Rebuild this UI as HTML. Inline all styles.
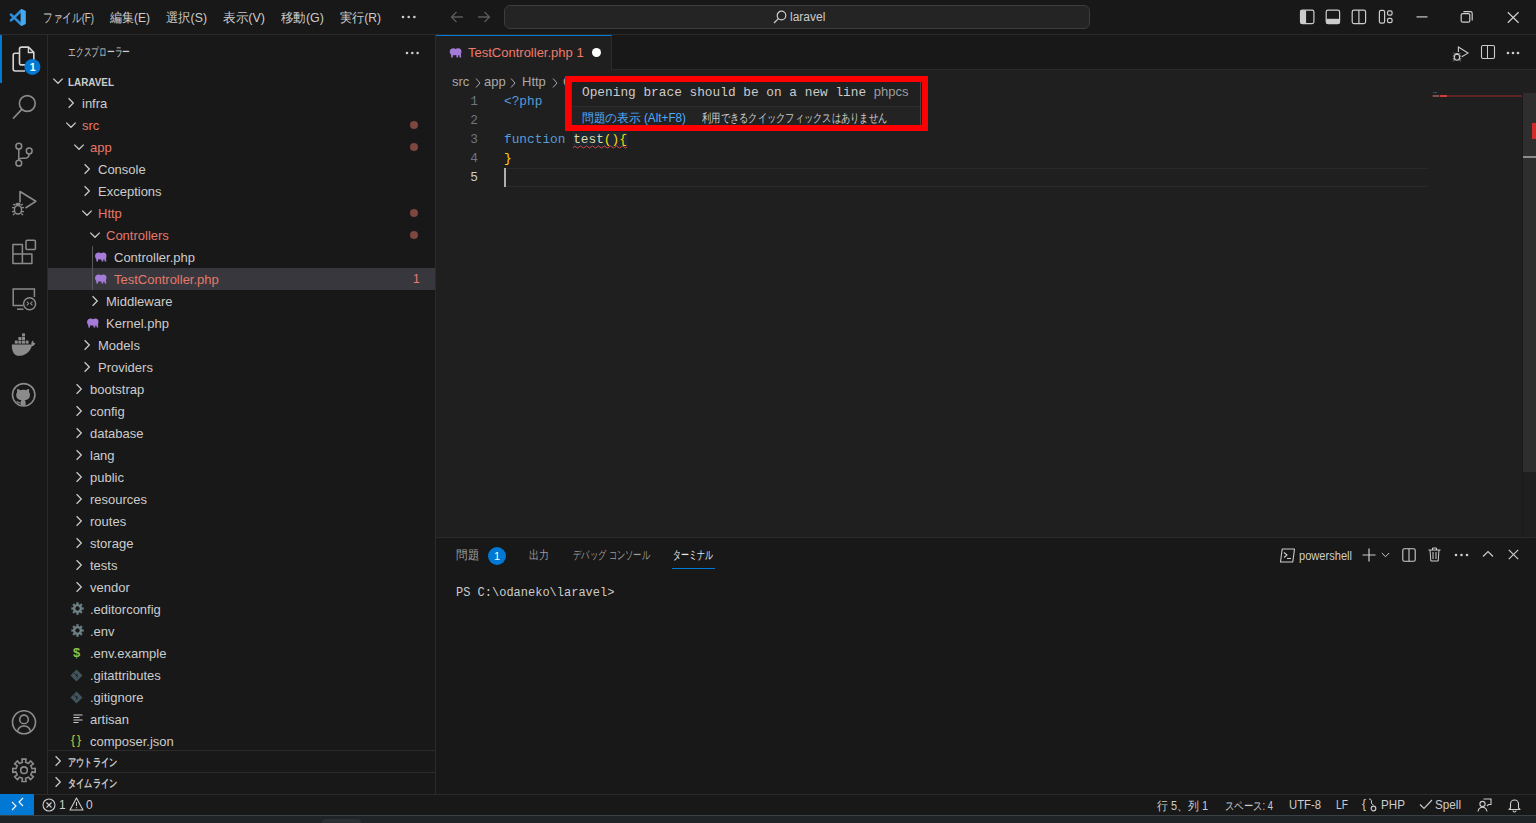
<!DOCTYPE html>
<html><head><meta charset="utf-8">
<style>
*{box-sizing:border-box;margin:0;padding:0}
html,body{width:1536px;height:823px;overflow:hidden;background:#181818;font-family:"Liberation Sans",sans-serif;color:#cccccc;font-size:13px}
.abs{position:absolute}
#title{left:0;top:0;width:1536px;height:35px;background:#181818;border-bottom:1px solid #2b2b2b}
.menu{top:9px;font-size:13px;color:#cccccc;white-space:nowrap}
#act{left:0;top:35px;width:48px;height:759px;background:#181818;border-right:1px solid #2b2b2b}
#side{left:48px;top:35px;width:388px;height:759px;background:#181818;border-right:1px solid #2b2b2b}
.row{position:absolute;left:0;width:387px;height:22px;line-height:22px;font-size:13px;color:#cccccc;white-space:nowrap}
.row .t{position:absolute;top:1px}
.chev{position:absolute;top:6px;width:10px;height:10px}
.red{color:#e5796a}
.dot{position:absolute;left:362px;top:7px;width:8px;height:8px;border-radius:50%;background:#7b473f}
#editor{left:436px;top:35px;width:1100px;height:502px;background:#1f1f1f}
.ln{left:0;width:42px;text-align:right;font-size:12.8px;line-height:19px;color:#6e7681}
.code{left:68px;font-size:12.8px;line-height:19px;white-space:pre}
#tabs{left:436px;top:35px;width:1100px;height:35px;background:#181818;border-bottom:1px solid #2b2b2b}
.mono{font-family:"Liberation Mono",monospace}
#panel{left:436px;top:537px;width:1100px;height:257px;background:#181818;border-top:1px solid #2b2b2b}
#status{left:0;top:794px;width:1536px;height:21px;background:#181818;border-top:1px solid #2b2b2b;font-size:12px}
#task{left:0;top:815px;width:1536px;height:8px;background:#1f2427;border-top:1px solid #3a4145}
svg{position:absolute;overflow:visible}
</style></head>
<body>
<!-- TITLE BAR -->
<div id="title" class="abs">
  <svg style="left:0;top:0" width="35" height="35" viewBox="0 0 35 35"><path d="M11 14.6L21.2 24.4M11 20.4L21.2 10.6" stroke="#2f8fdb" stroke-width="2.7" stroke-linecap="round"/><path d="M20.6 9.7L21.7 8.9L25.8 11V24L21.7 26.1L20.6 25.3Z" fill="#45a9f2"/></svg>
  <div class="abs menu fit" style="left:43px;--w:51px">ファイル(F)</div>
  <div class="abs menu fit" style="left:110px;--w:40px">編集(E)</div>
  <div class="abs menu fit" style="left:166px;--w:41px">選択(S)</div>
  <div class="abs menu fit" style="left:223px;--w:42px">表示(V)</div>
  <div class="abs menu fit" style="left:281px;--w:43px">移動(G)</div>
  <div class="abs menu fit" style="left:340px;--w:41px">実行(R)</div>
  <svg style="left:399.5px;top:13.6px" width="17.4" height="6" viewBox="0 0 17.4 6"><circle cx="3" cy="3" r="1.3" fill="#cccccc"/><circle cx="8.7" cy="3" r="1.3" fill="#cccccc"/><circle cx="14.4" cy="3" r="1.3" fill="#cccccc"/></svg>
  <!-- nav arrows -->
  <svg style="left:450px;top:11px" width="14" height="12" viewBox="0 0 14 12"><path d="M13 6H1.5M6.5 1L1.5 6l5 5" stroke="#5a5a5a" stroke-width="1.3" fill="none"/></svg>
  <svg style="left:477px;top:11px" width="14" height="12" viewBox="0 0 14 12"><path d="M1 6h11.5M7.5 1l5 5-5 5" stroke="#5a5a5a" stroke-width="1.3" fill="none"/></svg>
  <div class="abs" style="left:504px;top:5px;width:586px;height:24px;border:1px solid #3c3c3c;border-radius:6px;background:#242424"></div>
  <svg style="left:773px;top:10px" width="14" height="14" viewBox="0 0 14 14"><circle cx="8.5" cy="5.5" r="4.3" stroke="#cccccc" stroke-width="1.2" fill="none"/><path d="M5.4 8.6L1 13" stroke="#cccccc" stroke-width="1.3"/></svg>
  <div class="abs" style="left:790px;top:10px;font-size:12px;color:#cccccc">laravel</div>
  <!-- layout icons -->
  <svg style="left:1290px;top:0" width="246" height="35" viewBox="1290 0 246 35">
    <g stroke="#cccccc" stroke-width="1.2" fill="none">
      <rect x="1300.5" y="10.2" width="13.4" height="13.4" rx="1.8"/>
      <rect x="1326.2" y="10.2" width="13.4" height="13.4" rx="1.8"/>
      <rect x="1352.2" y="10.2" width="13.4" height="13.4" rx="1.8"/>
      <path d="M1358.9 10.2v13.4"/>
      <rect x="1379.4" y="10.4" width="5.2" height="12.8" rx="1.6"/>
      <rect x="1387.5" y="10.9" width="4.6" height="4.3" rx="1.6"/>
      <rect x="1387.5" y="18.4" width="4.6" height="4.3" rx="1.6"/>
      <path d="M1416.5 16.9h11"/>
      <rect x="1461.2" y="13.6" width="8.6" height="8.6" rx="1.5"/>
      <path d="M1463.4 11.6h7a1.8 1.8 0 0 1 1.8 1.8v7"/>
      <path d="M1507.8 12.2l10.8 10.6M1518.6 12.2l-10.8 10.6"/>
    </g>
    <rect x="1300.5" y="10.2" width="5.6" height="13.4" fill="#cccccc"/>
    <rect x="1326.2" y="18.8" width="13.4" height="4.8" fill="#cccccc"/>
  </svg>
</div>

<!-- ACTIVITY BAR -->
<div id="act" class="abs">
  <div class="abs" style="left:0;top:0;width:2px;height:48px;background:#0078d4"></div>
</div>

<!-- ACTIVITY ICONS -->
<svg style="left:0;top:0" width="48" height="823" viewBox="0 0 48 823">
  <path d="M19.4 53.2H15.2a2 2 0 0 0-2 2V69a2 2 0 0 0 2 2H25" stroke="#d4d4d4" stroke-width="1.6" fill="none"/>
  <path d="M21.5 47.1H28.5L33.8 52.4V62.9a2 2 0 0 1-2 2H21.5a2 2 0 0 1-2-2V49.1a2 2 0 0 1 2-2Z" stroke="#d4d4d4" stroke-width="1.6" fill="none"/>
  <path d="M28.4 47.1v5.4h5.4" stroke="#d4d4d4" stroke-width="1.3" fill="none"/>
  <circle cx="32.4" cy="66.9" r="8" fill="#0078d4"/>
  <text x="32.6" y="70.8" text-anchor="middle" font-family="Liberation Sans" font-size="10.5" font-weight="bold" fill="#ffffff">1</text>

  <circle cx="27.3" cy="103.5" r="7.9" stroke="#8b8b8b" stroke-width="1.6" fill="none"/>
  <path d="M21.8 109.4L13.6 118" stroke="#8b8b8b" stroke-width="1.8" stroke-linecap="round"/>

  <circle cx="18.8" cy="146.2" r="2.9" stroke="#8b8b8b" stroke-width="1.5" fill="none"/>
  <circle cx="29.2" cy="151" r="2.9" stroke="#8b8b8b" stroke-width="1.5" fill="none"/>
  <circle cx="18.8" cy="163.2" r="2.9" stroke="#8b8b8b" stroke-width="1.5" fill="none"/>
  <path d="M18.8 149.1v11.2M29.2 153.9c0 3.4-2 4.4-5 4.4h-1.5c-2 0-3.9 0.8-3.9 2" stroke="#8b8b8b" stroke-width="1.5" fill="none"/>

  <path d="M20 202.5V191.5L35.8 201.3L25.5 208" stroke="#8b8b8b" stroke-width="1.6" fill="none" stroke-linejoin="round"/>
  <ellipse cx="18" cy="209.8" rx="3.6" ry="4.3" stroke="#8b8b8b" stroke-width="1.5" fill="none"/>
  <path d="M15.2 205a2.8 2.2 0 0 1 5.6 0" fill="#8b8b8b"/>
  <path d="M12 207.6h2.5M12 211.7h2.5M21.5 207.6h2.5M21.5 211.7h2.5M13 215l1.8-1.6M23 215l-1.8-1.6M13.2 204l1.8 1.4M22.8 204l-1.8 1.4" stroke="#8b8b8b" stroke-width="1.3"/>

  <path d="M12.9 244.4h9.5v9.7h9.5v9.4H12.9Z M12.9 254.1h9.5M22.4 254.1v9.4" stroke="#8b8b8b" stroke-width="1.5" fill="none" stroke-linejoin="round"/>
  <rect x="26" y="240.2" width="9.4" height="9.4" rx="1.2" stroke="#8b8b8b" stroke-width="1.5" fill="none"/>

  <path d="M23.2 305.5H13.2V289H34.4V297" stroke="#8b8b8b" stroke-width="1.5" fill="none"/>
  <path d="M17 309.2h6.5" stroke="#8b8b8b" stroke-width="1.5"/>
  <circle cx="29.6" cy="303.7" r="6" stroke="#8b8b8b" stroke-width="1.5" fill="#181818"/>
  <path d="M26.8 301.7l1.8 1.8-1.8 1.8M32.4 301.7l-1.8 1.8 1.8 1.8" stroke="#8b8b8b" stroke-width="1.1" fill="none"/>

  <path d="M11.8 344.5H31.5c0.8-1.2 2.2-1.7 3.8-1.3c-0.6 2-2 2.8-3.6 3C30 352 25 355.8 19 355.8c-4.5 0-7.2-3.3-7.2-11.3Z" fill="#8b8b8b"/>
  <path d="M31.2 344.2c0-1.5 0.6-3 1.3-3.8c0.9 0.7 1.4 2 1.2 3.3" fill="#8b8b8b"/>
  <g fill="#8b8b8b"><rect x="14.8" y="340.6" width="3" height="3"/><rect x="18.4" y="340.6" width="3" height="3"/><rect x="22" y="340.6" width="3" height="3"/><rect x="25.6" y="340.6" width="3" height="3"/>
  <rect x="18.4" y="337" width="3" height="3"/><rect x="22" y="337" width="3" height="3"/><rect x="22" y="333.4" width="3" height="3"/></g>

  <circle cx="23.7" cy="394.8" r="11.2" stroke="#8b8b8b" stroke-width="1.6" fill="none"/>
  <path d="M20.6 405.6v-3.4c0-1 0.3-1.7 0.9-2.2c-3-0.3-5.3-1.5-5.3-5.3c0-1.1 0.4-2 1-2.8c-0.2-0.5-0.4-1.5 0.1-2.8c0 0 1-0.3 2.9 1.1c0.9-0.2 1.8-0.4 2.9-0.4s2 0.1 2.9 0.4c1.9-1.4 2.9-1.1 2.9-1.1c0.5 1.3 0.3 2.3 0.1 2.8c0.6 0.8 1 1.7 1 2.8c0 3.8-2.3 5-5.3 5.3c0.6 0.5 0.9 1.3 0.9 2.4v3.2Z" fill="#8b8b8b"/>
  <path d="M20.6 402.8c-2.4 0.6-3-0.8-3.8-1.8" stroke="#8b8b8b" stroke-width="1.2" fill="none"/>

  <circle cx="24" cy="722.2" r="11.5" stroke="#8b8b8b" stroke-width="1.6" fill="none"/>
  <circle cx="24" cy="719.4" r="4.3" stroke="#8b8b8b" stroke-width="1.6" fill="none"/>
  <path d="M17.6 730.8c1-3 3.4-4.8 6.4-4.8s5.4 1.8 6.4 4.8" stroke="#8b8b8b" stroke-width="1.6" fill="none"/>

  <path d="M22.40 762.26 L21.91 759.09 L26.09 759.09 L25.60 762.26 L28.56 763.48 L30.45 760.90 L33.40 763.85 L30.82 765.74 L32.04 768.70 L35.21 768.21 L35.21 772.39 L32.04 771.90 L30.82 774.86 L33.40 776.75 L30.45 779.70 L28.56 777.12 L25.60 778.34 L26.09 781.51 L21.91 781.51 L22.40 778.34 L19.44 777.12 L17.55 779.70 L14.60 776.75 L17.18 774.86 L15.96 771.90 L12.79 772.39 L12.79 768.21 L15.96 768.70 L17.18 765.74 L14.60 763.85 L17.55 760.90 L19.44 763.48Z" stroke="#8b8b8b" stroke-width="1.6" fill="none" stroke-linejoin="round"/>
  <circle cx="24" cy="770.2" r="3.3" stroke="#8b8b8b" stroke-width="1.6" fill="none"/>
</svg>

<!-- SIDEBAR -->
<div id="side" class="abs">
  <div class="abs fit" style="left:20px;top:9px;font-size:12px;color:#cccccc;--w:62px">エクスプローラー</div>
  <svg style="left:355.5px;top:15px" width="16.6" height="6" viewBox="0 0 16.6 6"><circle cx="3" cy="3" r="1.3" fill="#cccccc"/><circle cx="8.3" cy="3" r="1.3" fill="#cccccc"/><circle cx="13.6" cy="3" r="1.3" fill="#cccccc"/></svg>
  <div class="row" style="top:35px;font-weight:bold;font-size:11px"><svg class="chev" style="left:5px" viewBox="0 0 10 10"><path d="M0.3 2.6l4.7 4.7 4.7-4.7" stroke="#cccccc" stroke-width="1.25" fill="none"/></svg><span class="t fit" style="left:20px;--w:46px">LARAVEL</span></div>
<div class="row" style="top:57px;"><svg class="chev" style="left:18px" viewBox="0 0 10 10"><path d="M2.6 0.3l4.7 4.7-4.7 4.7" stroke="#cccccc" stroke-width="1.25" fill="none"/></svg><span class="t" style="left:34px">infra</span></div>
<div class="row red" style="top:79px;"><svg class="chev" style="left:18px" viewBox="0 0 10 10"><path d="M0.3 2.6l4.7 4.7 4.7-4.7" stroke="#cccccc" stroke-width="1.25" fill="none"/></svg><span class="t" style="left:34px">src</span><div class="dot"></div></div>
<div class="row red" style="top:101px;"><svg class="chev" style="left:26px" viewBox="0 0 10 10"><path d="M0.3 2.6l4.7 4.7 4.7-4.7" stroke="#cccccc" stroke-width="1.25" fill="none"/></svg><span class="t" style="left:42px">app</span><div class="dot"></div></div>
<div class="row" style="top:123px;"><svg class="chev" style="left:34px" viewBox="0 0 10 10"><path d="M2.6 0.3l4.7 4.7-4.7 4.7" stroke="#cccccc" stroke-width="1.25" fill="none"/></svg><span class="t" style="left:50px">Console</span></div>
<div class="row" style="top:145px;"><svg class="chev" style="left:34px" viewBox="0 0 10 10"><path d="M2.6 0.3l4.7 4.7-4.7 4.7" stroke="#cccccc" stroke-width="1.25" fill="none"/></svg><span class="t" style="left:50px">Exceptions</span></div>
<div class="row red" style="top:167px;"><svg class="chev" style="left:34px" viewBox="0 0 10 10"><path d="M0.3 2.6l4.7 4.7 4.7-4.7" stroke="#cccccc" stroke-width="1.25" fill="none"/></svg><span class="t" style="left:50px">Http</span><div class="dot"></div></div>
<div class="row red" style="top:189px;"><svg class="chev" style="left:42px" viewBox="0 0 10 10"><path d="M0.3 2.6l4.7 4.7 4.7-4.7" stroke="#cccccc" stroke-width="1.25" fill="none"/></svg><span class="t" style="left:58px">Controllers</span><div class="dot"></div></div>
<div class="row" style="top:211px;"><svg style="left:46px;top:6px" width="13" height="11" viewBox="0 0 13 11"><path d="M2 1.5C3.5 0.2 6 0.5 7 1.2C8.2 0.4 10.6 0.3 11.8 1.6C12.8 2.8 12.6 5 12 6.3L12.3 9.5H10.7L10.4 7.6H9.4L9.2 9.5H7.6L7.4 7.4C6.2 7.6 4.8 7.4 4.2 7.2L4 9.5H2.4L2.2 6.9C0.8 5.9 0.6 2.8 2 1.5Z" fill="#a47bd6"/></svg><span class="t" style="left:66px">Controller.php</span></div>
<div class="row red" style="top:233px;background:#37373d;"><svg style="left:46px;top:6px" width="13" height="11" viewBox="0 0 13 11"><path d="M2 1.5C3.5 0.2 6 0.5 7 1.2C8.2 0.4 10.6 0.3 11.8 1.6C12.8 2.8 12.6 5 12 6.3L12.3 9.5H10.7L10.4 7.6H9.4L9.2 9.5H7.6L7.4 7.4C6.2 7.6 4.8 7.4 4.2 7.2L4 9.5H2.4L2.2 6.9C0.8 5.9 0.6 2.8 2 1.5Z" fill="#a47bd6"/></svg><span class="t" style="left:66px">TestController.php</span><span class="abs" style="left:365px;top:0;color:#ee7b6d;font-size:12px">1</span></div>
<div class="row" style="top:255px;"><svg class="chev" style="left:42px" viewBox="0 0 10 10"><path d="M2.6 0.3l4.7 4.7-4.7 4.7" stroke="#cccccc" stroke-width="1.25" fill="none"/></svg><span class="t" style="left:58px">Middleware</span></div>
<div class="row" style="top:277px;"><svg style="left:38px;top:6px" width="13" height="11" viewBox="0 0 13 11"><path d="M2 1.5C3.5 0.2 6 0.5 7 1.2C8.2 0.4 10.6 0.3 11.8 1.6C12.8 2.8 12.6 5 12 6.3L12.3 9.5H10.7L10.4 7.6H9.4L9.2 9.5H7.6L7.4 7.4C6.2 7.6 4.8 7.4 4.2 7.2L4 9.5H2.4L2.2 6.9C0.8 5.9 0.6 2.8 2 1.5Z" fill="#a47bd6"/></svg><span class="t" style="left:58px">Kernel.php</span></div>
<div class="row" style="top:299px;"><svg class="chev" style="left:34px" viewBox="0 0 10 10"><path d="M2.6 0.3l4.7 4.7-4.7 4.7" stroke="#cccccc" stroke-width="1.25" fill="none"/></svg><span class="t" style="left:50px">Models</span></div>
<div class="row" style="top:321px;"><svg class="chev" style="left:34px" viewBox="0 0 10 10"><path d="M2.6 0.3l4.7 4.7-4.7 4.7" stroke="#cccccc" stroke-width="1.25" fill="none"/></svg><span class="t" style="left:50px">Providers</span></div>
<div class="row" style="top:343px;"><svg class="chev" style="left:26px" viewBox="0 0 10 10"><path d="M2.6 0.3l4.7 4.7-4.7 4.7" stroke="#cccccc" stroke-width="1.25" fill="none"/></svg><span class="t" style="left:42px">bootstrap</span></div>
<div class="row" style="top:365px;"><svg class="chev" style="left:26px" viewBox="0 0 10 10"><path d="M2.6 0.3l4.7 4.7-4.7 4.7" stroke="#cccccc" stroke-width="1.25" fill="none"/></svg><span class="t" style="left:42px">config</span></div>
<div class="row" style="top:387px;"><svg class="chev" style="left:26px" viewBox="0 0 10 10"><path d="M2.6 0.3l4.7 4.7-4.7 4.7" stroke="#cccccc" stroke-width="1.25" fill="none"/></svg><span class="t" style="left:42px">database</span></div>
<div class="row" style="top:409px;"><svg class="chev" style="left:26px" viewBox="0 0 10 10"><path d="M2.6 0.3l4.7 4.7-4.7 4.7" stroke="#cccccc" stroke-width="1.25" fill="none"/></svg><span class="t" style="left:42px">lang</span></div>
<div class="row" style="top:431px;"><svg class="chev" style="left:26px" viewBox="0 0 10 10"><path d="M2.6 0.3l4.7 4.7-4.7 4.7" stroke="#cccccc" stroke-width="1.25" fill="none"/></svg><span class="t" style="left:42px">public</span></div>
<div class="row" style="top:453px;"><svg class="chev" style="left:26px" viewBox="0 0 10 10"><path d="M2.6 0.3l4.7 4.7-4.7 4.7" stroke="#cccccc" stroke-width="1.25" fill="none"/></svg><span class="t" style="left:42px">resources</span></div>
<div class="row" style="top:475px;"><svg class="chev" style="left:26px" viewBox="0 0 10 10"><path d="M2.6 0.3l4.7 4.7-4.7 4.7" stroke="#cccccc" stroke-width="1.25" fill="none"/></svg><span class="t" style="left:42px">routes</span></div>
<div class="row" style="top:497px;"><svg class="chev" style="left:26px" viewBox="0 0 10 10"><path d="M2.6 0.3l4.7 4.7-4.7 4.7" stroke="#cccccc" stroke-width="1.25" fill="none"/></svg><span class="t" style="left:42px">storage</span></div>
<div class="row" style="top:519px;"><svg class="chev" style="left:26px" viewBox="0 0 10 10"><path d="M2.6 0.3l4.7 4.7-4.7 4.7" stroke="#cccccc" stroke-width="1.25" fill="none"/></svg><span class="t" style="left:42px">tests</span></div>
<div class="row" style="top:541px;"><svg class="chev" style="left:26px" viewBox="0 0 10 10"><path d="M2.6 0.3l4.7 4.7-4.7 4.7" stroke="#cccccc" stroke-width="1.25" fill="none"/></svg><span class="t" style="left:42px">vendor</span></div>
<div class="row" style="top:563px;"><svg style="left:23px;top:4px" width="13" height="13" viewBox="0 0 13 13"><path d="M5.51 2.01 L5.21 0.33 L7.79 0.33 L7.49 2.01 L8.98 2.63 L9.95 1.23 L11.77 3.05 L10.37 4.02 L10.99 5.51 L12.67 5.21 L12.67 7.79 L10.99 7.49 L10.37 8.98 L11.77 9.95 L9.95 11.77 L8.98 10.37 L7.49 10.99 L7.79 12.67 L5.21 12.67 L5.51 10.99 L4.02 10.37 L3.05 11.77 L1.23 9.95 L2.63 8.98 L2.01 7.49 L0.33 7.79 L0.33 5.21 L2.01 5.51 L2.63 4.02 L1.23 3.05 L3.05 1.23 L4.02 2.63Z M6.5 4.3a2.2 2.2 0 1 0 0.01 0Z" fill="#6d8086" fill-rule="evenodd"/></svg><span class="t" style="left:42px">.editorconfig</span></div>
<div class="row" style="top:585px;"><svg style="left:23px;top:4px" width="13" height="13" viewBox="0 0 13 13"><path d="M5.51 2.01 L5.21 0.33 L7.79 0.33 L7.49 2.01 L8.98 2.63 L9.95 1.23 L11.77 3.05 L10.37 4.02 L10.99 5.51 L12.67 5.21 L12.67 7.79 L10.99 7.49 L10.37 8.98 L11.77 9.95 L9.95 11.77 L8.98 10.37 L7.49 10.99 L7.79 12.67 L5.21 12.67 L5.51 10.99 L4.02 10.37 L3.05 11.77 L1.23 9.95 L2.63 8.98 L2.01 7.49 L0.33 7.79 L0.33 5.21 L2.01 5.51 L2.63 4.02 L1.23 3.05 L3.05 1.23 L4.02 2.63Z M6.5 4.3a2.2 2.2 0 1 0 0.01 0Z" fill="#6d8086" fill-rule="evenodd"/></svg><span class="t" style="left:42px">.env</span></div>
<div class="row" style="top:607px;"><div class="abs" style="left:25px;top:0;color:#8dc149;font-weight:bold;font-size:13px">$</div><span class="t" style="left:42px">.env.example</span></div>
<div class="row" style="top:629px;"><svg style="left:22px;top:5px" width="13" height="13" viewBox="0 0 13 13"><path d="M6.5 0.5L12.5 6.5L6.5 12.5L0.5 6.5Z" fill="#41535b"/><path d="M4.2 4.2L7 7M7 4.8V8.6" stroke="#181818" stroke-width="0.9"/></svg><span class="t" style="left:42px">.gitattributes</span></div>
<div class="row" style="top:651px;"><svg style="left:22px;top:5px" width="13" height="13" viewBox="0 0 13 13"><path d="M6.5 0.5L12.5 6.5L6.5 12.5L0.5 6.5Z" fill="#41535b"/><path d="M4.2 4.2L7 7M7 4.8V8.6" stroke="#181818" stroke-width="0.9"/></svg><span class="t" style="left:42px">.gitignore</span></div>
<div class="row" style="top:673px;"><svg style="left:25px;top:6px" width="10" height="10" viewBox="0 0 10 10"><path d="M0.5 1h9M0.5 3.5h6M0.5 6h9M0.5 8.5h5" stroke="#cccccc" stroke-width="1"/></svg><span class="t" style="left:42px">artisan</span></div>
<div class="row" style="top:695px;"><div class="abs" style="left:23px;top:-1px;color:#cbcb41;font-size:12px;letter-spacing:2px">{}</div><span class="t" style="left:42px">composer.json</span></div>
    <div class="abs" style="left:44px;top:211px;width:1px;height:44px;background:#585858"></div>
  <div class="abs" style="left:0;top:715px;width:387px;height:1px;background:#2b2b2b"></div>
  <div class="row" style="top:715px;font-weight:bold;font-size:11px"><svg class="chev" style="left:5px" viewBox="0 0 10 10"><path d="M2.6 0.3l4.7 4.7-4.7 4.7" stroke="#cccccc" stroke-width="1.25" fill="none"/></svg><span class="t fit" style="left:20px;--w:49px">アウトライン</span></div>
  <div class="abs" style="left:0;top:737px;width:387px;height:1px;background:#2b2b2b"></div>
  <div class="row" style="top:736px;font-weight:bold;font-size:11px"><svg class="chev" style="left:5px" viewBox="0 0 10 10"><path d="M2.6 0.3l4.7 4.7-4.7 4.7" stroke="#cccccc" stroke-width="1.25" fill="none"/></svg><span class="t fit" style="left:20px;--w:49px">タイムライン</span></div>
</div>

<!-- EDITOR -->
<div id="editor" class="abs">
  <!-- tabs bar -->
  <div class="abs" style="left:0;top:0;width:1100px;height:35px;background:#181818;border-bottom:1px solid #2b2b2b"></div>
  <div class="abs" style="left:0;top:0;width:176px;height:35px;background:#1f1f1f;border-top:1px solid #0078d4;border-right:1px solid #2b2b2b"></div>
  <svg style="left:13px;top:13px" width="13" height="10" viewBox="0 0 13 10"><path d="M1.6 1.2C3 -0.1 5.6 0.1 6.6 0.9C7.8 0 10.4 -0.1 11.7 1.3C12.8 2.6 12.6 4.9 11.9 6.1L12.2 9.4H10.6L10.3 7.3H9.3L9.1 9.4H7.5L7.3 7.1C6.1 7.3 4.6 7.1 4 6.9L3.8 9.4H2.2L2 6.6C0.4 5.5 0.3 2.5 1.6 1.2Z" fill="#a47bd6"/></svg>
  <div class="abs" style="left:32px;top:10px;font-size:13px;color:#ee7b6d;white-space:nowrap">TestController.php 1</div>
  <div class="abs" style="left:156px;top:13px;width:9px;height:9px;border-radius:50%;background:#ffffff"></div>
  <!-- editor actions -->
  <svg style="left:1010px;top:8px" width="24" height="20" viewBox="1446 43 24 20"><path d="M1458.4 52V47L1468 53.1L1461.8 56.8" stroke="#cccccc" stroke-width="1.1" fill="none" stroke-linejoin="miter"/><ellipse cx="1457" cy="57.2" rx="2.6" ry="3" stroke="#cccccc" stroke-width="1.1" fill="#181818"/><path d="M1454.6 54.8a2.4 1.8 0 0 1 4.8 0" fill="#cccccc"/><path d="M1452.8 56h1.6M1452.8 58.8h1.6M1459.6 56h1.6M1459.6 58.8h1.6M1453.4 61l1.2-1M1460.6 61l-1.2-1M1453.6 53.2l1.2 1M1460.4 53.2l-1.2 1" stroke="#cccccc" stroke-width="0.9"/></svg>
  <svg style="left:1044px;top:10px" width="16" height="16" viewBox="0 0 16 16"><rect x="1.5" y="0.5" width="13" height="13" rx="1.5" stroke="#cccccc" stroke-width="1.1" fill="none"/><path d="M7.5 0.5v13" stroke="#cccccc" stroke-width="1"/></svg>
  <svg style="left:1069.1px;top:14.8px" width="16" height="6" viewBox="0 0 16 6"><circle cx="3" cy="3" r="1.35" fill="#cccccc"/><circle cx="8" cy="3" r="1.35" fill="#cccccc"/><circle cx="13" cy="3" r="1.35" fill="#cccccc"/></svg>
  <!-- breadcrumbs -->
  <div class="abs" style="left:16px;top:39px;font-size:13px;color:#a9a9a9;white-space:nowrap">src</div>
  <svg style="left:38px;top:41px" width="8" height="14" viewBox="0 0 8 14"><path d="M2 2.5l4 4.5-4 4.5" stroke="#a9a9a9" stroke-width="1" fill="none"/></svg>
  <div class="abs" style="left:48px;top:39px;font-size:13px;color:#a9a9a9;white-space:nowrap">app</div>
  <svg style="left:73px;top:41px" width="8" height="14" viewBox="0 0 8 14"><path d="M2 2.5l4 4.5-4 4.5" stroke="#a9a9a9" stroke-width="1" fill="none"/></svg>
  <div class="abs" style="left:86px;top:39px;font-size:13px;color:#a9a9a9;white-space:nowrap">Http</div>
  <svg style="left:115px;top:41px" width="8" height="14" viewBox="0 0 8 14"><path d="M2 2.5l4 4.5-4 4.5" stroke="#a9a9a9" stroke-width="1" fill="none"/></svg>
  <div class="abs" style="left:127px;top:39px;font-size:13px;color:#a9a9a9;white-space:nowrap">Controllers</div>
  <!-- current line box -->
  <div class="abs" style="left:68px;top:133px;width:923px;height:19px;border-top:1px solid #2a2a2a;border-bottom:1px solid #2a2a2a"></div>
  <div class="abs" style="left:68px;top:133px;width:2px;height:19px;background:#aeafad"></div>
  <!-- line numbers -->
  <div class="abs mono ln" style="top:57px">1</div>
  <div class="abs mono ln" style="top:76px">2</div>
  <div class="abs mono ln" style="top:95px">3</div>
  <div class="abs mono ln" style="top:114px">4</div>
  <div class="abs mono ln" style="top:133px;color:#cccccc">5</div>
  <!-- code -->
  <div class="abs mono code" style="top:57px;color:#569cd6">&lt;?php</div>
  <div class="abs" style="left:137px;top:97px;width:55px;height:14px;background:#1d2731"></div>
  <div class="abs mono code" style="top:95px"><span style="color:#569cd6">function</span> <span style="color:#dcdcaa">test</span><span style="color:#ffd700">(){</span></div>
  <svg style="left:137px;top:110px" width="55" height="4" viewBox="0 0 55 4"><path d="M0 3 Q1.5 0 3 2 T6 2 T9 2 T12 2 T15 2 T18 2 T21 2 T24 2 T27 2 T30 2 T33 2 T36 2 T39 2 T42 2 T45 2 T48 2 T51 2 T54 2" stroke="#c94d4d" stroke-width="1" fill="none"/></svg>
  <div class="abs mono code" style="top:114px;color:#ffd700">}</div>
  <!-- minimap -->
  <div class="abs" style="left:997px;top:57px;width:4px;height:1px;background:#3a5060"></div>
  <div class="abs" style="left:996px;top:60px;width:90px;height:2px;background:#5e2424"></div>
  <div class="abs" style="left:1004px;top:60px;width:7px;height:2px;background:#d23b3b"></div>
  <div class="abs" style="left:997px;top:60px;width:6px;height:2px;background:#7a5050"></div>
  <!-- scrollbar / overview ruler -->
  <div class="abs" style="left:1086px;top:58px;width:1px;height:444px;background:#1a1a1a"></div>
  <div class="abs" style="left:1087px;top:58px;width:13px;height:379px;background:#2e2e2e"></div>
  <div class="abs" style="left:1087px;top:121px;width:13px;height:2px;background:#8c8c8c"></div>
  <div class="abs" style="left:1096px;top:88px;width:4px;height:16px;background:#d02c2c"></div>
</div>
<!-- HOVER -->
<div class="abs" style="left:571px;top:80px;width:350px;height:46px;background:#202020;border:1px solid #454545"></div>
<div class="abs" style="left:572px;top:106px;width:348px;height:20px;background:#232323;border-top:1px solid #2c2c2c"></div>
<div class="abs mono" style="left:582px;top:84px;font-size:12.8px;color:#cccccc;white-space:nowrap;line-height:16px">Opening brace should be on a new line <span style="color:#9d9d9d;font-family:'Liberation Sans',sans-serif;font-size:13px">phpcs</span></div>
<div class="abs fit" style="left:582px;top:110px;font-size:12px;color:#4daafc;white-space:nowrap;--w:104px">問題の表示 (Alt+F8)</div>
<div class="abs fit" style="left:702px;top:110px;font-size:12px;color:#cccccc;white-space:nowrap;--w:185px">利用できるクイックフィックスはありません</div>
<div class="abs" style="left:565px;top:76px;width:363px;height:55px;border:6px solid #ff0000"></div>

<!-- PANEL -->
<div id="panel" class="abs">
  <div class="abs fit" style="left:20px;top:9px;font-size:12px;color:#9d9d9d;--w:23px">問題</div>
  <div class="abs" style="left:52px;top:9px;width:18px;height:18px;border-radius:50%;background:#0078d4;color:#fff;font-size:11px;line-height:18px;text-align:center">1</div>
  <div class="abs fit" style="left:93px;top:9px;font-size:12px;color:#9d9d9d;--w:20px">出力</div>
  <div class="abs fit" style="left:137px;top:9px;font-size:12px;color:#9d9d9d;--w:77px">デバッグ コンソール</div>
  <div class="abs fit" style="left:237px;top:9px;font-size:12px;color:#e7e7e7;--w:40px">ターミナル</div>
  <div class="abs" style="left:236px;top:30px;width:43px;height:1px;background:#0078d4"></div>
  <div class="abs mono" style="left:20px;top:47px;font-size:12px;line-height:16px;color:#cccccc;white-space:pre">PS C:\odaneko\laravel&gt;</div>
  <!-- right toolbar -->
  <svg style="left:843px;top:10px" width="17" height="15" viewBox="0 0 17 15"><path d="M3.2 1h12.3l-1.7 13H1.5Z" stroke="#cccccc" stroke-width="1.1" fill="none" stroke-linejoin="round"/><path d="M5 4.5l3 2.5-3 2.5M8 10.5h4" stroke="#cccccc" stroke-width="1.1" fill="none"/></svg>
  <div class="abs fit" style="left:863px;top:11px;font-size:12px;color:#cccccc;--w:53px">powershell</div>
  <svg style="left:926px;top:10px" width="14" height="14" viewBox="0 0 14 14"><path d="M7 0.5v13M0.5 7h13" stroke="#cccccc" stroke-width="1.2"/></svg>
  <svg style="left:945px;top:14px" width="9" height="6" viewBox="0 0 9 6"><path d="M0.8 1l3.7 3.7L8.2 1" stroke="#cccccc" stroke-width="1" fill="none"/></svg>
  <svg style="left:966px;top:10px" width="14" height="14" viewBox="0 0 14 14"><rect x="0.8" y="0.8" width="12.4" height="12.4" rx="1.5" stroke="#cccccc" stroke-width="1.1" fill="none"/><path d="M7 0.8v12.4" stroke="#cccccc" stroke-width="1.1"/></svg>
  <svg style="left:992px;top:9px" width="13" height="15" viewBox="0 0 13 15"><path d="M0.5 3h12M4.5 3V1h4v2M2 3l0.8 11h7.4L11 3M5 5v7M8 5v7" stroke="#cccccc" stroke-width="1" fill="none"/></svg>
  <svg style="left:1016.5px;top:13.6px" width="17.0" height="6" viewBox="0 0 17.0 6"><circle cx="3" cy="3" r="1.3" fill="#cccccc"/><circle cx="8.5" cy="3" r="1.3" fill="#cccccc"/><circle cx="14.0" cy="3" r="1.3" fill="#cccccc"/></svg>
  <svg style="left:1046px;top:12px" width="12" height="8" viewBox="0 0 12 8"><path d="M1 6.5l5-5 5 5" stroke="#cccccc" stroke-width="1.2" fill="none"/></svg>
  <svg style="left:1072px;top:11px" width="11" height="11" viewBox="0 0 11 11"><path d="M0.8 0.8l9.4 9.4M10.2 0.8l-9.4 9.4" stroke="#cccccc" stroke-width="1.2"/></svg>
</div>

<!-- STATUS -->
<div id="status" class="abs">
  <div class="abs" style="left:0;top:-1px;width:34px;height:22px;background:#0078d4"></div>
  <svg style="left:11px;top:3px" width="13" height="13" viewBox="0 0 13 13"><path d="M1 11.5L5 7.5 1 3.5" stroke="#ffffff" stroke-width="1.1" fill="none" transform="translate(0,0.5)"/><path d="M12 1.5L8 5.5 12 9.5" stroke="#ffffff" stroke-width="1.1" fill="none" transform="translate(0,-1.5)"/></svg>
  <svg style="left:42px;top:3px" width="14" height="14" viewBox="0 0 14 14"><circle cx="7" cy="7" r="6" stroke="#cccccc" stroke-width="1.1" fill="none"/><path d="M4.5 4.5l5 5M9.5 4.5l-5 5" stroke="#cccccc" stroke-width="1.1"/></svg>
  <div class="abs" style="left:59px;top:3px;font-size:12px;color:#cccccc">1</div>
  <svg style="left:69px;top:2px" width="15" height="14" viewBox="0 0 15 14"><path d="M7.5 1L14 13H1Z" stroke="#cccccc" stroke-width="1.1" fill="none" stroke-linejoin="round"/><path d="M7.5 5v4M7.5 10.3v1" stroke="#cccccc" stroke-width="1.1"/></svg>
  <div class="abs" style="left:86px;top:3px;font-size:12px;color:#cccccc">0</div>
  <div class="abs fit" style="left:1157px;top:3px;font-size:12px;color:#cccccc;--w:51px">行 5、列 1</div>
  <div class="abs fit" style="left:1225px;top:3px;font-size:12px;color:#cccccc;--w:48px">スペース: 4</div>
  <div class="abs fit" style="left:1289px;top:3px;font-size:12px;color:#cccccc;--w:32px">UTF-8</div>
  <div class="abs fit" style="left:1336px;top:3px;font-size:12px;color:#cccccc;--w:12px">LF</div>
  <div class="abs" style="left:1362px;top:2px;font-size:12px;color:#cccccc">{</div>
  <svg style="left:1368px;top:3px" width="9" height="14" viewBox="0 0 9 14"><path d="M1 1c2 0 2.5 1 2.5 3s0.5 2.5 2 3" stroke="#cccccc" stroke-width="1" fill="none"/><circle cx="5.5" cy="10.5" r="2.3" stroke="#cccccc" stroke-width="1.2" fill="none"/></svg>
  <div class="abs fit" style="left:1381px;top:3px;font-size:12px;color:#cccccc;--w:24px">PHP</div>
  <svg style="left:1419px;top:4px" width="14" height="11" viewBox="0 0 14 11"><path d="M1 5.5l4 4L13 1" stroke="#cccccc" stroke-width="1.1" fill="none"/></svg>
  <div class="abs fit" style="left:1435px;top:3px;font-size:12px;color:#cccccc;--w:26px">Spell</div>
  <svg style="left:1477px;top:3px" width="15" height="14" viewBox="0 0 15 14"><circle cx="5.5" cy="6" r="2.6" stroke="#cccccc" stroke-width="1.1" fill="none"/><path d="M1 13.5c0.5-2.7 2.3-4.2 4.5-4.2s4 1.5 4.5 4.2" stroke="#cccccc" stroke-width="1.1" fill="none"/><path d="M6.5 1h7.5v5.5h-2.5l-1.5 1.5" stroke="#cccccc" stroke-width="1.1" fill="none"/></svg>
  <svg style="left:1508px;top:3px" width="13" height="14" viewBox="0 0 13 14"><path d="M2.5 10V6a4 4 0 0 1 8 0v4l1.5 1.5H1Z" stroke="#cccccc" stroke-width="1.1" fill="none" stroke-linejoin="round"/><path d="M5 12.5a1.5 1.5 0 0 0 3 0" stroke="#cccccc" stroke-width="1.1" fill="none"/></svg>
</div>
<div id="task" class="abs">
  <div class="abs" style="left:322px;top:3px;width:39px;height:10px;border-radius:4px;background:#2b3034"></div>
</div>
<script>
(function(){
  var els=document.querySelectorAll('.fit');
  for(var i=0;i<els.length;i++){
    var e=els[i];
    var w=parseFloat(getComputedStyle(e).getPropertyValue('--w'));
    e.style.whiteSpace='nowrap';
    var r=e.getBoundingClientRect().width;
    if(w&&r>0){e.style.transformOrigin='0 50%';e.style.transform='scaleX('+(w/r)+')';}
  }
})();
</script>
</body></html>
